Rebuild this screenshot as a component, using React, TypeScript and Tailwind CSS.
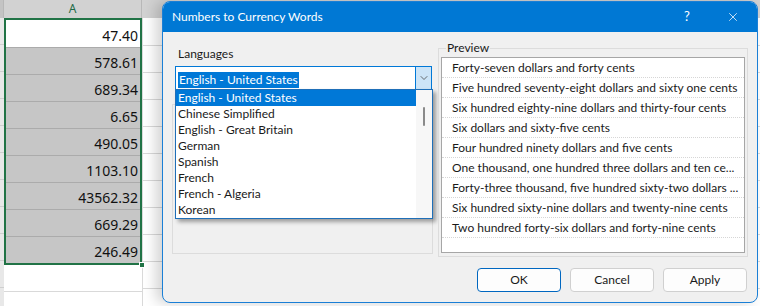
import { X, ChevronDown } from "lucide-react";

const values = ["47.40", "578.61", "689.34", "6.65", "490.05", "1103.10", "43562.32", "669.29", "246.49"];

const languages = [
  "English - United States",
  "Chinese Simplified",
  "English - Great Britain",
  "German",
  "Spanish",
  "French",
  "French - Algeria",
  "Korean",
];

const preview = [
  "Forty-seven dollars and forty cents",
  "Five hundred seventy-eight dollars and sixty one cents",
  "Six hundred eighty-nine dollars and thirty-four cents",
  "Six dollars and sixty-five cents",
  "Four hundred ninety dollars and five cents",
  "One thousand, one hundred three dollars and ten ce...",
  "Forty-three thousand, five hundred sixty-two dollars ...",
  "Six hundred sixty-nine dollars and twenty-nine cents",
  "Two hundred forty-six dollars and forty-nine cents",
  "",
];

function Sheet() {
  return (
    <div className="flex flex-col w-full h-full bg-white font-['Noto_Sans',sans-serif]">
      <div className="h-[5px] bg-[#f0f0f0]" />
      <div className="flex h-[18px] bg-[#d2d2d2]">
        <div className="w-[4px] border-r border-[#b8b8b8] bg-[#c4c4c4]" />
        <div className="w-[138px] border-r border-[#b8b8b8] flex items-center justify-center text-[12px] text-[#1e6b47]">
          A
        </div>
        <div className="flex-1" />
      </div>
      <div className="flex flex-1">
        <div className="w-[4px] flex flex-col bg-[#e8e8e8]">
          {Array.from({ length: 11 }).map((_, i) => (
            <div key={i} className="h-[27px] border-b border-[#cfcfcf]" />
          ))}
        </div>
        <div className="w-[138px] flex flex-col">
          <div className="relative flex flex-col border-2 border-[#217346]">
            {values.map((v, i) => (
              <div
                key={v}
                className={
                  "h-[27px] flex items-end justify-end pr-[2px] pb-[1px] text-[14px] text-[#111] " +
                  (i === 0 ? "bg-white" : "bg-[#c6c6c6] border-t border-[#ababab]")
                }
              >
                {v}
              </div>
            ))}
            <div className="absolute -right-[5px] -bottom-[5px] w-[6px] h-[6px] bg-[#217346] border border-white" />
          </div>
          <div className="h-[27px] border-b border-[#d9d9d9]" />
        </div>
        <div className="flex-1 flex flex-col border-l border-[#d9d9d9] pt-[1px]">
          {Array.from({ length: 11 }).map((_, i) => (
            <div key={i} className="h-[27px] border-b border-[#d9d9d9] shrink-0" />
          ))}
        </div>
      </div>
    </div>
  );
}

function Dialog() {
  return (
    <div className="absolute left-[162px] top-[1px] w-[596px] h-[302px] rounded-[8px] border border-[#1a7fd6] bg-[#f0f0f0] overflow-hidden shadow-[-6px_0_14px_rgba(0,0,0,0.18)] font-['Lato',sans-serif] text-[#1a1a1a]">
      <div className="h-[30px] bg-[#0078d4] flex items-center pl-[9px] text-white text-[12px]">
        <span className="flex-1">Numbers to Currency Words</span>
        <span className="w-[46px] text-center text-[13px]">?</span>
        <span className="w-[46px] flex justify-center mr-[1px]">
          <X size={14} strokeWidth={1.3} />
        </span>
      </div>
      <div className="flex flex-col px-[9px] pt-[14px]">
        <div className="flex gap-[5px]">
          <div className="relative w-[261px] flex flex-col">
            <div className="pl-[6px] text-[12px] h-[14px] leading-[14px] mt-[1px]">Languages</div>
            <div className="ml-[3px] mt-[5px] w-[257px] h-[24px] border border-[#0078d7] bg-white flex items-center">
              <div className="flex-1 pl-[2px]">
                <span className="bg-[#0078d7] text-white text-[12px] leading-[16px] px-[1px] inline-block">
                  English - United States
                </span>
              </div>
              <div className="w-[16px] h-full bg-[#cce4f7] border-l border-[#0078d7] flex items-center justify-center text-[#404040]">
                <ChevronDown size={12} strokeWidth={1.5} />
              </div>
            </div>
            <div className="mt-[14px] h-[150px] border border-[#dcdcdc]" />
            <div className="absolute left-[3px] top-[43px] w-[258px] h-[130px] bg-white border border-[#1f6fb8] shadow-[3px_3px_4px_rgba(0,0,0,0.35)] flex">
              <div className="flex-1 flex flex-col">
                {languages.map((l, i) => (
                  <div
                    key={l}
                    className={
                      "h-[16px] leading-[16px] pl-[2px] text-[12px] " +
                      (i === 0 ? "bg-[#0078d7] text-white" : "")
                    }
                  >
                    {l}
                  </div>
                ))}
              </div>
              <div className="w-[16px] bg-[#f7f7f7] flex justify-center pt-[17px]">
                <div className="w-[2px] h-[19px] bg-[#8a8a8a] rounded-full" />
              </div>
            </div>
          </div>
          <div className="relative w-[310px] mt-[2px] h-[209px] border border-[#dcdcdc]">
            <div className="absolute left-[7px] -top-[9px] px-[1px] bg-[#f0f0f0] text-[12px] leading-[16px]">Preview</div>
            <div className="mt-[8px] mx-[2px] h-[196px] bg-white border border-[#a6a6a6] flex flex-col overflow-hidden">
              {preview.map((p, i) => (
                <div
                  key={i}
                  className="h-[20px] shrink-0 border-b border-dotted border-[#d6d6d6] pl-[10px] text-[12px] leading-[19px] whitespace-nowrap"
                >
                  {p}
                </div>
              ))}
            </div>
          </div>
        </div>
        <div className="flex justify-end gap-[9px] mt-[11px] pr-[1px]">
          <button className="w-[84px] h-[24px] rounded-[4px] bg-[#fdfdfd] border border-[#0067c0] text-[12px]">OK</button>
          <button className="w-[84px] h-[24px] rounded-[4px] bg-[#fdfdfd] border border-[#d0d0d0] text-[12px]">Cancel</button>
          <button className="w-[84px] h-[24px] rounded-[4px] bg-[#fdfdfd] border border-[#d0d0d0] text-[12px]">Apply</button>
        </div>
      </div>
    </div>
  );
}

export default function App() {
  return (
    <div className="relative w-[760px] h-[306px] overflow-hidden bg-white">
      <Sheet />
      <Dialog />
    </div>
  );
}
